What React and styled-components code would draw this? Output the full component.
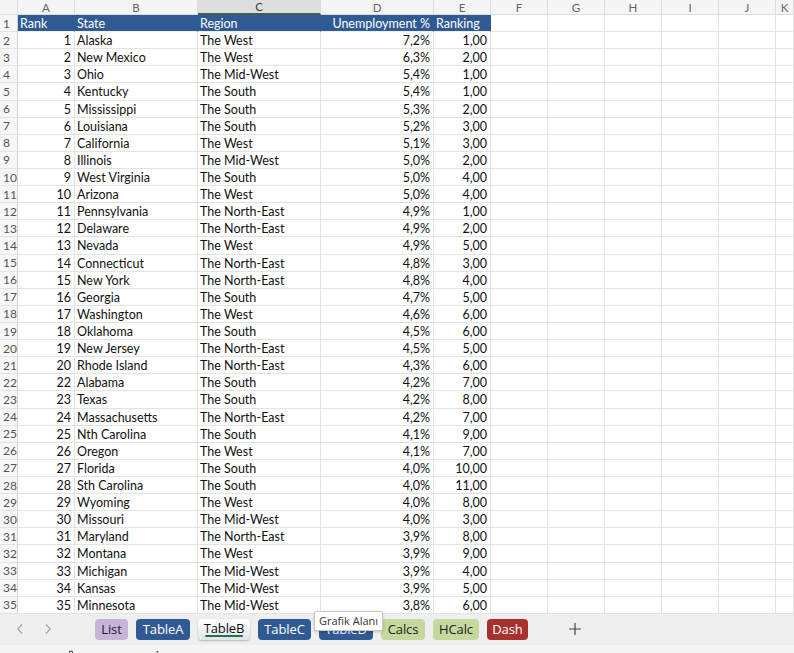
import React from "react";
import styled, { createGlobalStyle } from "styled-components";

const rows = [
  [1, "Alaska", "The West", "7,2%", "1,00"],
  [2, "New Mexico", "The West", "6,3%", "2,00"],
  [3, "Ohio", "The Mid-West", "5,4%", "1,00"],
  [4, "Kentucky", "The South", "5,4%", "1,00"],
  [5, "Mississippi", "The South", "5,3%", "2,00"],
  [6, "Louisiana", "The South", "5,2%", "3,00"],
  [7, "California", "The West", "5,1%", "3,00"],
  [8, "Illinois", "The Mid-West", "5,0%", "2,00"],
  [9, "West Virginia", "The South", "5,0%", "4,00"],
  [10, "Arizona", "The West", "5,0%", "4,00"],
  [11, "Pennsylvania", "The North-East", "4,9%", "1,00"],
  [12, "Delaware", "The North-East", "4,9%", "2,00"],
  [13, "Nevada", "The West", "4,9%", "5,00"],
  [14, "Connecticut", "The North-East", "4,8%", "3,00"],
  [15, "New York", "The North-East", "4,8%", "4,00"],
  [16, "Georgia", "The South", "4,7%", "5,00"],
  [17, "Washington", "The West", "4,6%", "6,00"],
  [18, "Oklahoma", "The South", "4,5%", "6,00"],
  [19, "New Jersey", "The North-East", "4,5%", "5,00"],
  [20, "Rhode Island", "The North-East", "4,3%", "6,00"],
  [22, "Alabama", "The South", "4,2%", "7,00"],
  [23, "Texas", "The South", "4,2%", "8,00"],
  [24, "Massachusetts", "The North-East", "4,2%", "7,00"],
  [25, "Nth Carolina", "The South", "4,1%", "9,00"],
  [26, "Oregon", "The West", "4,1%", "7,00"],
  [27, "Florida", "The South", "4,0%", "10,00"],
  [28, "Sth Carolina", "The South", "4,0%", "11,00"],
  [29, "Wyoming", "The West", "4,0%", "8,00"],
  [30, "Missouri", "The Mid-West", "4,0%", "3,00"],
  [31, "Maryland", "The North-East", "3,9%", "8,00"],
  [32, "Montana", "The West", "3,9%", "9,00"],
  [33, "Michigan", "The Mid-West", "3,9%", "4,00"],
  [34, "Kansas", "The Mid-West", "3,9%", "5,00"],
  [35, "Minnesota", "The Mid-West", "3,8%", "6,00"],
];

const letters = ["A", "B", "C", "D", "E", "F", "G", "H", "I", "J", "K"];
const blanks = ["F", "G", "H", "I", "J", "K"];

const tabs = [
  { name: "List", kind: "purple", w: 33 },
  { name: "TableA", kind: "blue", w: 54 },
  { name: "TableB", kind: "active", w: 52 },
  { name: "TableC", kind: "blue", w: 53 },
  { name: "TableD", kind: "blue", w: 54 },
  { name: "Calcs", kind: "green", w: 44 },
  { name: "HCalc", kind: "green", w: 46 },
  { name: "Dash", kind: "red", w: 41 },
];

const GlobalStyle = createGlobalStyle`
  html, body {
    margin: 0;
    padding: 0;
    overflow: hidden;
    background: #fff;
  }
`;

export default function App() {
  return (
    <>
      <GlobalStyle />
      <Window>
        <Sheet>
          <Corner />
          {letters.map((l) => (
            <ColHead key={l} $selected={l === "C"}>
              {l}
            </ColHead>
          ))}

          <RowHead>1</RowHead>
          <HeadCell>Rank</HeadCell>
          <HeadCell>State</HeadCell>
          <HeadCell>Region</HeadCell>
          <HeadCell $right>Unemployment %</HeadCell>
          <HeadCell>Ranking</HeadCell>
          {blanks.map((b) => (
            <Cell key={b} />
          ))}

          {rows.map((r, i) => (
            <React.Fragment key={r[1]}>
              <RowHead>{i + 2}</RowHead>
              <Cell $right>{r[0]}</Cell>
              <Cell>{r[1]}</Cell>
              <Cell>{r[2]}</Cell>
              <Cell $right>{r[3]}</Cell>
              <Cell $right>{r[4]}</Cell>
              {blanks.map((b) => (
                <Cell key={b} />
              ))}
            </React.Fragment>
          ))}
        </Sheet>

        <TabBar>
          <NavButton>
            <svg width="8" height="12" viewBox="0 0 8 12" fill="none" stroke="#a0a0a0" strokeWidth="1.1">
              <path d="M6 1.5 1.8 6 6 10.5" />
            </svg>
          </NavButton>
          <NavButton>
            <svg width="8" height="12" viewBox="0 0 8 12" fill="none" stroke="#a0a0a0" strokeWidth="1.1">
              <path d="M2 1.5 6.2 6 2 10.5" />
            </svg>
          </NavButton>
          <Tabs>
            {tabs.map((t) => (
              <Tab key={t.name} $kind={t.kind} $w={t.w}>
                {t.name}
              </Tab>
            ))}
          </Tabs>
          <AddButton>
            <svg width="12" height="12" viewBox="0 0 12 12" stroke="#444" strokeWidth="1.2">
              <path d="M6 0v12M0 6h12" />
            </svg>
          </AddButton>
          <Tooltip>Grafik Alanı</Tooltip>
        </TabBar>

        <StatusBar>
          <span>Hazır</span>
          <StatusItem>
            <svg width="12" height="12" viewBox="0 0 12 12" fill="none" stroke="#444" strokeWidth="1.2">
              <circle cx="6" cy="2.5" r="1.5" />
              <path d="M2 5h8M6 5v6M3.5 11l2.5-4 2.5 4" />
            </svg>
            <b>Erişilebilirlik: İncelemeye değer</b>
          </StatusItem>
        </StatusBar>
      </Window>
    </>
  );
}

const Window = styled.div`
  width: 794px;
  height: 653px;
  overflow: hidden;
  display: flex;
  flex-direction: column;
  font-family: Lato, "Open Sans", sans-serif;
`;

const Sheet = styled.div`
  display: grid;
  grid-template-columns: 18px 57px 123px 123px 113px repeat(6, 57px) 1fr;
  grid-template-rows: 15px repeat(35, 17.114px);
  flex: none;
  font-size: 12.5px;
  color: #111;
`;

const Corner = styled.div`
  background: #f5f5f5;
  border-right: 1px solid #dcdcdc;
  border-bottom: 1px solid #dcdcdc;
`;

const ColHead = styled.div`
  display: flex;
  align-items: center;
  justify-content: center;
  font-size: 11.5px;
  color: ${(p) => (p.$selected ? "#3a3a3a" : "#666")};
  background: ${(p) => (p.$selected ? "#dedede" : "#f5f5f5")};
  border-right: 1px solid #dcdcdc;
  border-bottom: ${(p) => (p.$selected ? "2px solid #3f5f4f" : "1px solid #dcdcdc")};
  box-sizing: border-box;
`;

const RowHead = styled.div`
  display: flex;
  align-items: center;
  padding-left: 3px;
  font-size: 12px;
  color: #555;
  background: #f7f7f7;
  border-right: 1px solid #d4d4d4;
  border-bottom: 1px solid #e4e4e4;
  box-sizing: border-box;
`;

const Cell = styled.div`
  display: flex;
  align-items: center;
  justify-content: ${(p) => (p.$right ? "flex-end" : "flex-start")};
  padding: 1px 3px 0 2px;
  white-space: nowrap;
  overflow: hidden;
  border-right: 1px solid #e3e3e3;
  border-bottom: 1px solid #e3e3e3;
  box-sizing: border-box;
`;

const HeadCell = styled(Cell)`
  background: #2f5a94;
  color: #fff;
  border-right-color: #2f5a94;
  border-bottom-color: #f0f0f0;
`;

const TabBar = styled.div`
  position: relative;
  display: flex;
  align-items: center;
  height: 31px;
  flex: none;
  padding-left: 6px;
  background: #efefef;
  font-family: "Open Sans", "Noto Sans", sans-serif;
`;

const NavButton = styled.div`
  width: 28px;
  display: flex;
  justify-content: center;
  align-items: center;
`;

const Tabs = styled.div`
  display: flex;
  align-items: center;
  gap: 8px;
  margin-left: 33px;
`;

const tabColors = {
  purple: { bg: "#c8b4d8", fg: "#222" },
  blue: { bg: "#2f5a94", fg: "#fff" },
  green: { bg: "#c5d89e", fg: "#222" },
  red: { bg: "#a8312f", fg: "#fff" },
  active: { bg: "linear-gradient(#ffffff, #dfe4ea)", fg: "#111" },
};

const Tab = styled.div`
  position: relative;
  width: ${(p) => p.$w}px;
  height: 21px;
  border-radius: 4px;
  display: flex;
  align-items: center;
  justify-content: center;
  font-size: 13px;
  letter-spacing: -0.1px;
  background: ${(p) => tabColors[p.$kind].bg};
  color: ${(p) => tabColors[p.$kind].fg};
  box-shadow: ${(p) => (p.$kind === "active" ? "0 1px 2px rgba(0,0,0,0.25)" : "none")};
  padding-bottom: ${(p) => (p.$kind === "active" ? "3px" : "0")};
  box-sizing: border-box;

  &::after {
    content: "";
    display: ${(p) => (p.$kind === "active" ? "block" : "none")};
    position: absolute;
    left: 7px;
    right: 7px;
    bottom: 3px;
    height: 2px;
    border-radius: 1px;
    background: #217346;
  }
`;

const AddButton = styled.div`
  margin-left: 41px;
  display: flex;
  align-items: center;
`;

const Tooltip = styled.div`
  position: absolute;
  left: 314px;
  top: -3px;
  padding: 1px 4px 2px;
  background: #fff;
  border: 1px solid #c8c8c8;
  border-radius: 2px;
  box-shadow: 0 1px 3px rgba(0, 0, 0, 0.2);
  font-size: 11px;
  color: #333;
  white-space: nowrap;
`;

const StatusBar = styled.div`
  display: flex;
  align-items: flex-start;
  gap: 24px;
  height: 24px;
  flex: none;
  padding: 4px 0 0 8px;
  background: #f5f5f5;
  font-family: "Open Sans", "Noto Sans", sans-serif;
  font-size: 11px;
  color: #333;
`;

const StatusItem = styled.div`
  display: flex;
  align-items: center;
  gap: 4px;
  margin-left: 6px;
`;
